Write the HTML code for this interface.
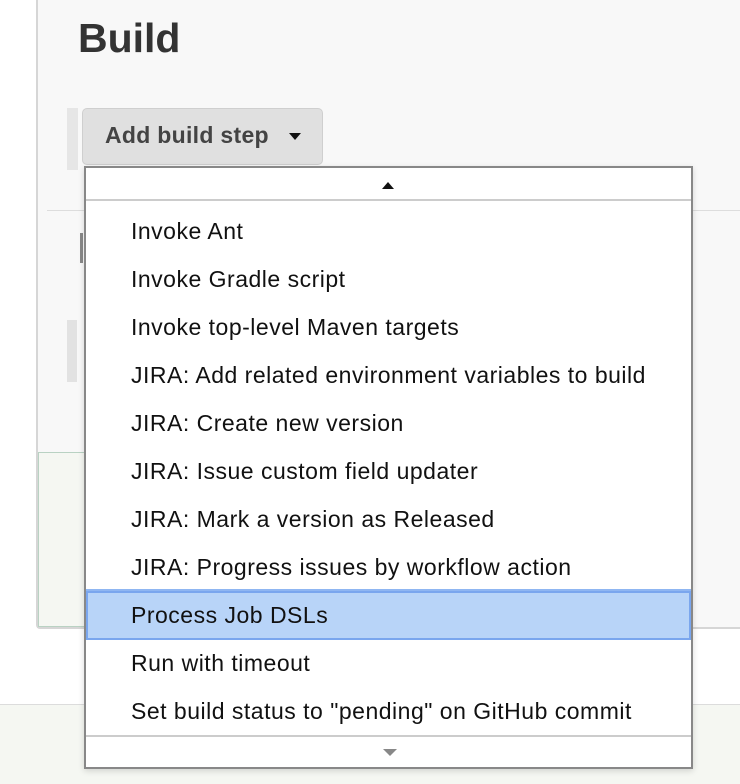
<!DOCTYPE html>
<html><head><style>
*{margin:0;padding:0;box-sizing:border-box}
body{width:740px;height:784px;position:relative;overflow:hidden;background:#fff;font-family:"Liberation Sans",Arial,sans-serif}
.abs{position:absolute}
.item{position:absolute;left:45px;font-size:23px;letter-spacing:0.5px;color:#111;line-height:48px;height:48px;white-space:nowrap}
</style></head><body>
<div class="abs" style="left:0;top:704px;width:740px;height:80px;background:#f5f7f2;border-top:1px solid #dcdcdc"></div>
<div class="abs" style="left:36px;top:0;width:710px;height:629px;background:#f8f8f8;border-left:2px solid #d6d6d6;border-bottom:2px solid #d6d6d6;border-bottom-left-radius:4px"></div>
<div class="abs" style="left:47px;top:210px;width:700px;height:1px;background:#ddd"></div>
<div class="abs" style="left:80px;top:233px;width:3px;height:30px;background:#888"></div>
<div class="abs" style="left:67px;top:320px;width:10px;height:62px;background:#e2e2e2"></div>
<div class="abs" style="left:38px;top:452px;width:60px;height:175px;background:#f5f7f2;border:1px solid #b9d2c3"></div>
<div class="abs" style="left:78px;top:15px;font-size:41px;font-weight:bold;color:#333">Build</div>
<div class="abs" style="left:67px;top:108px;width:11px;height:62px;background:#e6e6e6"></div>
<div class="abs" style="left:82px;top:108px;width:241px;height:57px;background:#e0e0e0;border:1px solid #cfcfcf;border-radius:5px"></div>
<div class="abs" style="left:105px;top:122px;font-size:23px;font-weight:bold;letter-spacing:0.3px;color:#444">Add build step</div>
<div class="abs" style="left:289px;top:133px;width:0;height:0;border-left:6px solid transparent;border-right:6px solid transparent;border-top:7px solid #111"></div>
<div class="abs" style="left:84px;top:166px;width:609px;height:603px;background:#fff;border:2px solid #888;box-shadow:0 2px 6px rgba(0,0,0,.15)">
  <div class="abs" style="left:296px;top:14px;width:0;height:0;border-left:6px solid transparent;border-right:6px solid transparent;border-bottom:7px solid #111"></div>
  <div class="abs" style="left:0;top:31px;width:605px;height:538px;border-top:2px solid #ccc;border-bottom:2px solid #ccc">
    <div class="item" style="top:6px">Invoke Ant</div>
    <div class="item" style="top:54px">Invoke Gradle script</div>
    <div class="item" style="top:102px">Invoke top-level Maven targets</div>
    <div class="item" style="top:150px">JIRA: Add related environment variables to build</div>
    <div class="item" style="top:198px">JIRA: Create new version</div>
    <div class="item" style="top:246px">JIRA: Issue custom field updater</div>
    <div class="item" style="top:294px">JIRA: Mark a version as Released</div>
    <div class="item" style="top:342px">JIRA: Progress issues by workflow action</div>
    <div class="abs" style="left:0;top:390px;width:605px;height:49px;background:#b8d4f8;border:2px solid #7aa6ee;box-shadow:0 -2px 0 #8fb6f2"></div>
    <div class="item" style="top:390px">Process Job DSLs</div>
    <div class="item" style="top:438px">Run with timeout</div>
    <div class="item" style="top:486px">Set build status to "pending" on GitHub commit</div>
  </div>
  <div class="abs" style="left:297px;top:581px;width:0;height:0;border-left:7px solid transparent;border-right:7px solid transparent;border-top:7px solid #888"></div>
</div>
</body></html>
